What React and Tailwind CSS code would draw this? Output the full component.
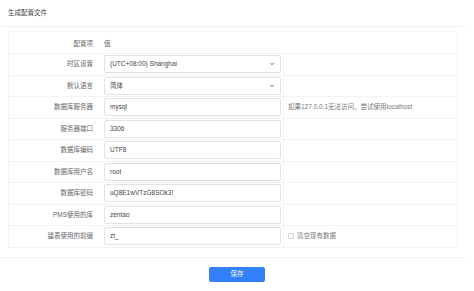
import React from "react";
import { ChevronDown } from "lucide-react";

const rows = [
  { label: "时区设置", value: "(UTC+08:00) Shanghai", select: true },
  { label: "默认语言", value: "简体", select: true },
  { label: "数据库服务器", value: "mysql", note: "如果127.0.0.1无法访问，尝试使用localhost" },
  { label: "服务器端口", value: "3306" },
  { label: "数据库编码", value: "UTF8" },
  { label: "数据库用户名", value: "root" },
  { label: "数据库密码", value: "uQ8E1wVTzG8SOk3!" },
  { label: "PMS使用的库", value: "zentao" },
  { label: "建表使用的前缀", value: "zt_", check: "清空现有数据" },
];

const Field = ({ value, select }) => (
  <div className="flex items-center justify-between w-[177px] h-[18px] px-[5px] border border-[#e3e3e3] rounded-[2px] bg-white text-[#444]">
    <span>{value}</span>
    {select ? <ChevronDown size={6} strokeWidth={3.5} className="text-[#555]" /> : null}
  </div>
);

const App = () => {
  return (
    <div
      className="w-[474px] h-[291px] bg-white text-[6.5px] leading-none"
      style={{ fontFamily: '"Liberation Sans", "Noto Sans CJK SC", sans-serif' }}
    >
      <div className="flex items-center h-[27px] w-[466px] px-2 border-b border-[#f0f0f0] text-[#444]">
        生成配置文件
      </div>
      <div className="w-[466px] px-2 pt-[4px] pb-[9px] border-b border-[#f0f0f0]">
        <div className="border border-[#f3f3f3]">
          <div className="flex items-center h-[21px] pt-[4px] text-[#666]">
            <div className="w-[88px] pr-[4px] text-right">配置项</div>
            <div className="pl-[7px]">值</div>
          </div>
          {rows.map((row) => (
            <div key={row.label} className="flex items-stretch h-[21.5px] border-t border-[#f3f3f3]">
              <div className="flex items-center justify-end w-[88px] pr-[4px] text-[#666]">{row.label}</div>
              <div className="flex items-center w-[186px] pl-[7px]">
                <Field value={row.value} select={row.select} />
              </div>
              <div className="flex items-center flex-1 pl-[4px] border-l border-[#f3f3f3] text-[#777]">
                {row.note}
                {row.check ? (
                  <>
                    <span className="w-[6px] h-[6px] mr-[3px] border border-[#d5d5d5] rounded-[1px] bg-white" />
                    {row.check}
                  </>
                ) : null}
              </div>
            </div>
          ))}
        </div>
      </div>
      <div className="flex justify-center w-[474px] pt-[9px]">
        <button className="flex items-center justify-center w-[56px] h-[15px] rounded-[2px] bg-[#3280fc] text-white">
          保存
        </button>
      </div>
    </div>
  );
};

export default App;
